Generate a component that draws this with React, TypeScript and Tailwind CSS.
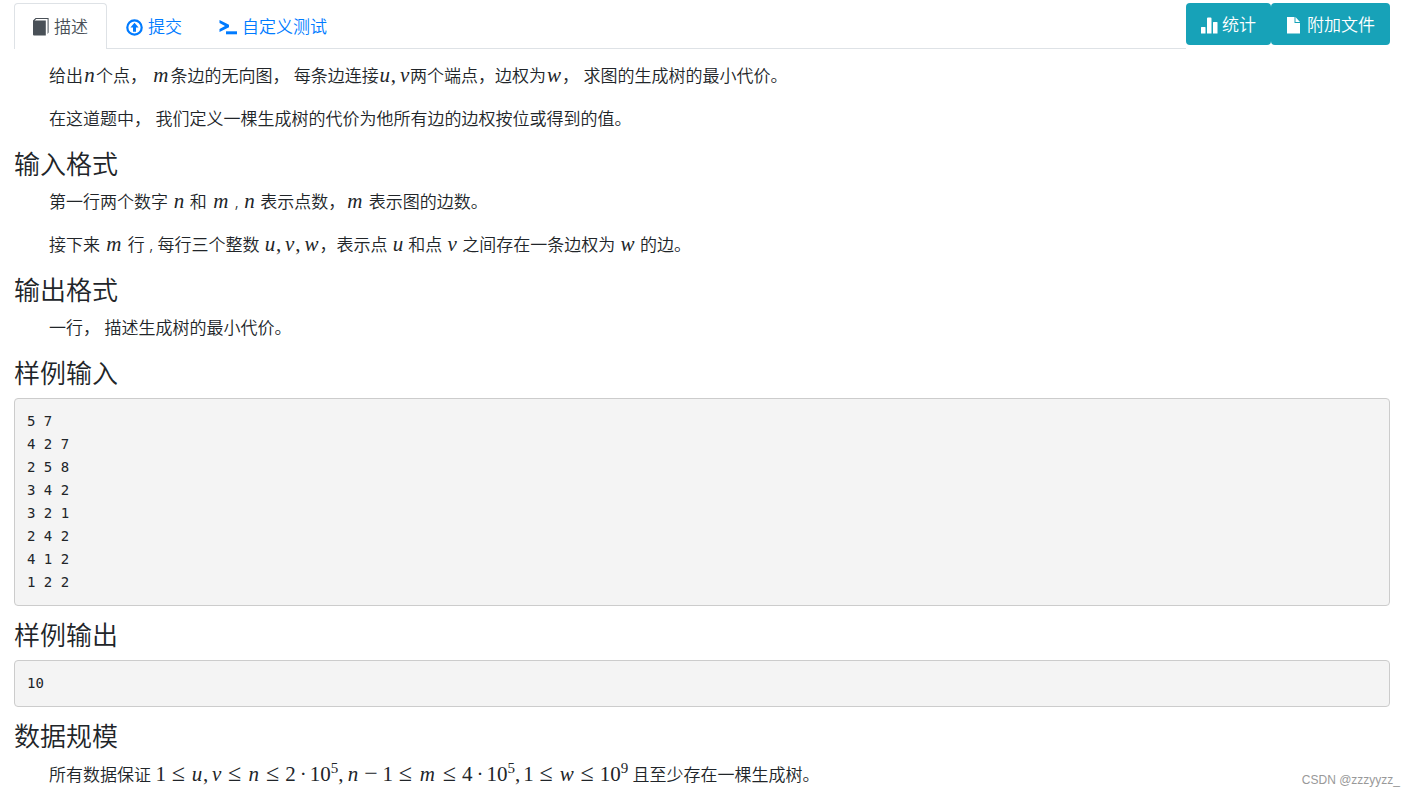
import type { ReactNode } from "react";

const glyphWidths = {
  n: "w-[13px]",
  m: "w-[19px]",
  u: "w-[12px]",
  v: "w-[11px]",
  w: "w-[16px]",
};

function Var({ name }: { name: keyof typeof glyphWidths }) {
  return <i className={`inline-block text-center ${glyphWidths[name]}`}>{name}</i>;
}

function Le() {
  return <span className="mx-[5px] inline-block w-[15px] text-center text-2xl leading-none">≤</span>;
}

function Minus() {
  return <span className="mx-1 inline-block w-[15px] text-center text-2xl leading-none">−</span>;
}

function Dot() {
  return <span className="mx-1 inline-block w-[6px] text-center">·</span>;
}

function Comma() {
  return <span className="mr-[3px]">,</span>;
}

function Sup({ children }: { children: ReactNode }) {
  return <sup className="-top-2 align-baseline text-[15px] leading-none">{children}</sup>;
}

function M({ children }: { children: ReactNode }) {
  return (
    <span className="whitespace-nowrap font-['Liberation_Serif',serif] text-[21px] leading-none font-normal">
      {children}
    </span>
  );
}

function BookIcon() {
  return (
    <svg viewBox="0 0 16 18" className="h-[18px] w-4" fill="currentColor" aria-hidden="true">
      <path d="M2.600 0H15.600V14.500L14.600 16V1H3.200L1.600 2.600H12.800V17.500H1Q0 17.500 0 16.500V2.600Z" />
    </svg>
  );
}

function UploadIcon() {
  return (
    <svg viewBox="0 0 17 17" className="size-[17px]" fill="currentColor" aria-hidden="true">
      <circle cx="8.5" cy="8.5" r="7.2" fill="none" stroke="currentColor" strokeWidth="2.2" />
      <path d="M8.5 3.8L12.6 8.6H10V12.8H7V8.6H4.4Z" />
    </svg>
  );
}

function ConsoleIcon() {
  return (
    <svg viewBox="0 0 18 17" className="h-[17px] w-[18px]" fill="currentColor" aria-hidden="true">
      <path d="M.5 1L10 5.800V8.200L.5 13V9.900L6 7L.5 4.100Z" />
      <path d="M7 12.300H18V15.300H7Z" />
    </svg>
  );
}

function StatsIcon() {
  return (
    <svg viewBox="0 0 17 17" className="size-[17px]" fill="currentColor" aria-hidden="true">
      <path d="M0 10.500Q0 10 .5 10H4Q4.500 10 4.500 10.500V16.500H0ZM6 1.500Q6 .5 7 .5H9.500Q10.500 .5 10.500 1.500V16.500H6ZM12 5.500Q12 5 12.500 5H16Q16.500 5 16.500 5.500V16.500H12Z" />
    </svg>
  );
}

function FileIcon() {
  return (
    <svg viewBox="0 0 17 17" className="size-[17px]" fill="currentColor" aria-hidden="true">
      <path d="M1 0H8.500V6H14V16.500H1Z" />
      <path d="M9.500 0L14 5H9.500Z" />
    </svg>
  );
}

function Heading({ children }: { children: ReactNode }) {
  return <h3 className="mb-[9px] text-[26px] leading-[31px]">{children}</h3>;
}

function P({ children }: { children: ReactNode }) {
  return <p className="mb-[17px] h-[26px] whitespace-nowrap pl-[35px]">{children}</p>;
}

function Sample({ children }: { children: ReactNode }) {
  return (
    <pre className="mb-[14px] rounded border border-[#cccccc] bg-[#f4f4f4] px-3 py-[11px] font-['DejaVu_Sans_Mono',monospace] text-sm leading-[23px]">
      {children}
    </pre>
  );
}

export default function App() {
  return (
    <div className="relative min-h-screen overflow-hidden bg-white pt-[3px] pr-[25px] pl-[14px] font-['Noto_Sans','Noto_Sans_CJK_SC',sans-serif] text-[17px] leading-[26px] font-[350] text-[#212529]">
      <header className="mb-[14px] flex items-start">
        <nav className="flex grow gap-px border-b border-[#dee2e6] text-[#007bff]">
          <a
            href="#description"
            className="-mb-px flex items-center gap-[5px] rounded-t border border-b-0 border-[#dee2e6] bg-white px-[18px] pt-[10px] pb-[9px] text-[#495057]"
          >
            <BookIcon />
            描述
          </a>
          <a href="#submit" className="flex items-center gap-[5px] px-[18px] pt-[11px] pb-2">
            <UploadIcon />
            提交
          </a>
          <a href="#custom-test" className="flex items-center gap-[5px] px-[18px] pt-[11px] pb-2">
            <ConsoleIcon />
            自定义测试
          </a>
        </nav>
        <button type="button" className="flex items-center gap-1 rounded bg-[#17a2b8] px-[15px] pt-[9px] pb-[7px] text-white">
          <StatsIcon />
          统计
        </button>
        <button type="button" className="flex items-center gap-1 rounded bg-[#17a2b8] px-[15px] pt-[9px] pb-[7px] text-white">
          <FileIcon />
          附加文件
        </button>
      </header>

      <main>
        <P>
          给出<M><Var name="n" /></M>个点， <M><Var name="m" /></M>条边的无向图， 每条边连接
          <M><Var name="u" /><Comma /><Var name="v" /></M>两个端点，边权为<M><Var name="w" /></M>， 求图的生成树的最小代价。
        </P>
        <P>在这道题中， 我们定义一棵生成树的代价为他所有边的边权按位或得到的值。</P>

        <Heading>输入格式</Heading>
        <P>
          第一行两个数字 <M><Var name="n" /></M> 和 <M><Var name="m" /></M> , <M><Var name="n" /></M> 表示点数，<M><Var name="m" /></M> 表示图的边数。
        </P>
        <P>
          接下来 <M><Var name="m" /></M> 行 , 每行三个整数 <M><Var name="u" /><Comma /><Var name="v" /><Comma /><Var name="w" /></M>，表示点 <M><Var name="u" /></M> 和点 <M><Var name="v" /></M> 之间存在一条边权为 <M><Var name="w" /></M> 的边。
        </P>

        <Heading>输出格式</Heading>
        <P>一行， 描述生成树的最小代价。</P>

        <Heading>样例输入</Heading>
        <Sample>{"5 7\n4 2 7\n2 5 8\n3 4 2\n3 2 1\n2 4 2\n4 1 2\n1 2 2"}</Sample>

        <Heading>样例输出</Heading>
        <Sample>10</Sample>

        <Heading>数据规模</Heading>
        <p className="h-[26px] whitespace-nowrap pl-[35px]">
          所有数据保证 <M>
            1<Le /><Var name="u" /><Comma /><Var name="v" /><Le /><Var name="n" /><Le />2<Dot />10<Sup>5</Sup><Comma />
            <Var name="n" /><Minus />1<Le /><Var name="m" /><Le />4<Dot />10<Sup>5</Sup><Comma />
            1<Le /><Var name="w" /><Le />10<Sup>9</Sup>
          </M> 且至少存在一棵生成树。
        </p>
      </main>

      <span className="absolute right-[15px] bottom-2 font-['Liberation_Sans',sans-serif] text-xs leading-4 font-normal text-[#999999]">
        CSDN @zzzyyzz_
      </span>
    </div>
  );
}
